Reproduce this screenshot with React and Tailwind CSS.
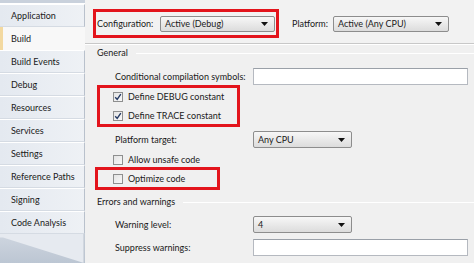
import React from 'react'

const tabs = [
  'Application',
  'Build',
  'Build Events',
  'Debug',
  'Resources',
  'Services',
  'Settings',
  'Reference Paths',
  'Signing',
  'Code Analysis',
]

function Arrow() {
  return (
    <svg width="7" height="4" viewBox="0 0 7 4" className="shrink-0">
      <path d="M0 0 H7 L3.5 4 Z" fill="#111" />
    </svg>
  )
}

function Dropdown({ value, className }) {
  return (
    <div
      className={
        'flex items-center justify-between rounded-[2px] border border-[#8d8d8d] bg-gradient-to-b from-[#f7f7f7] to-[#dcdcdc] pl-[4px] pr-[6px] ' +
        className
      }
    >
      <span>{value}</span>
      <Arrow />
    </div>
  )
}

function TextBox({ className }) {
  return (
    <div
      className={
        'border border-[#b5b9c0] border-t-[#9aa0a8] bg-white ' + className
      }
    />
  )
}

function CheckBox({ checked }) {
  return (
    <div className="flex h-[10px] w-[10px] shrink-0 items-center justify-center border border-[#8e8f8f] bg-gradient-to-br from-[#e4e4e4] to-[#f8f8f8]">
      {checked && (
        <svg width="8" height="8" viewBox="0 0 8 8">
          <path d="M1.2 4.2 L3.2 6.4 L6.8 1.2" fill="none" stroke="#253a63" strokeWidth="1.4" />
        </svg>
      )}
    </div>
  )
}

function CheckRow({ label, checked }) {
  return (
    <div className="flex h-[14px] items-center gap-[5px]">
      <CheckBox checked={checked} />
      <span>{label}</span>
    </div>
  )
}

function SectionTitle({ title }) {
  return (
    <div className="flex h-[18px] items-center gap-[8px] pl-[12px]">
      <span>{title}</span>
      <div className="h-px flex-1 border-b border-white bg-[#c9c9c9]" />
    </div>
  )
}

function Sidebar() {
  return (
    <div className="flex h-full w-[85px] shrink-0 flex-col bg-[#c9d1dc] pt-[3px]">
      <div className="h-px bg-white" />
      {tabs.map((tab) =>
        tab === 'Build' ? (
          <div
            key={tab}
            className="flex h-[23px] items-center border-l-[3px] border-[#f3d9a0] bg-[#f8f8f8] pl-[8px]"
          >
            {tab}
          </div>
        ) : (
          <div
            key={tab}
            className="flex h-[23px] items-center border-b border-t border-b-[#d5dbe3] border-t-white border-r border-r-[#b9c1cc] bg-gradient-to-r from-[#e4e9f0] to-[#eef1f5] pl-[11px]"
          >
            {tab}
          </div>
        )
      )}
      <svg className="w-full flex-1" viewBox="0 0 85 33" preserveAspectRatio="none">
        <defs>
          <linearGradient id="low" x1="0" y1="0" x2="0" y2="1">
            <stop offset="0" stopColor="#cfd6e0" />
            <stop offset="1" stopColor="#bcc6d3" />
          </linearGradient>
        </defs>
        <rect width="85" height="33" fill="url(#low)" />
        <path d="M0 0 H84 V33 L3 4 L0 4 Z" fill="#e6eaf0" />
        <path d="M84 0 V33" stroke="#b9c1cc" strokeWidth="1" />
      </svg>
    </div>
  )
}

export default function App() {
  return (
    <div
      className="flex h-[263px] w-[474px] overflow-hidden bg-[#f0f0f0] text-[9px] text-[#1a1a1a]"
      style={{ fontFamily: 'Lato, "Open Sans", sans-serif' }}
    >
      <Sidebar />
      <div className="flex min-w-0 flex-1 flex-col">
        <div className="flex h-[44px] shrink-0 items-center border-b border-[#c8c8c8] bg-[#f2f2f2] pt-[4px] shadow-[0_1px_0_#ffffff]">
          <div className="ml-[8px] flex h-[29px] w-[186px] items-center border-[3px] border-[#e3141c] pl-[1px]">
            <span className="w-[63px]">Configuration:</span>
            <Dropdown value="Active (Debug)" className="h-[16px] w-[115px]" />
          </div>
          <span className="ml-[13px] w-[41px]">Platform:</span>
          <Dropdown value="Active (Any CPU)" className="h-[16px] w-[116px]" />
        </div>

        <SectionTitle title="General" />

        <div className="mt-[6px] flex h-[17px] items-center pl-[30px] pr-[6px]">
          <span className="w-[138px]">Conditional compilation symbols:</span>
          <TextBox className="h-[17px] flex-1" />
        </div>

        <div className="ml-[12px] flex w-[143px] flex-col gap-[5px] border-[3px] border-[#e3141c] pb-[1px] pl-[13px] pt-[2px]">
          <CheckRow label="Define DEBUG constant" checked />
          <CheckRow label="Define TRACE constant" checked />
        </div>

        <div className="mt-[4px] flex h-[17px] items-center pl-[30px]">
          <span className="w-[138px]">Platform target:</span>
          <Dropdown value="Any CPU" className="h-[17px] w-[99px]" />
        </div>

        <div className="mt-[5px] pl-[28px]">
          <CheckRow label="Allow unsafe code" />
        </div>

        <div className="ml-[10px] flex h-[23px] w-[125px] items-center border-[3px] border-[#e3141c] pl-[15px]">
          <CheckRow label="Optimize code" />
        </div>

        <div className="mt-[3px]">
          <SectionTitle title="Errors and warnings" />
        </div>

        <div className="mt-[5px] flex h-[17px] items-center pl-[30px]">
          <span className="w-[138px]">Warning level:</span>
          <Dropdown value="4" className="h-[17px] w-[99px]" />
        </div>

        <div className="mt-[6px] flex h-[17px] items-center pl-[30px] pr-[6px]">
          <span className="w-[138px]">Suppress warnings:</span>
          <TextBox className="h-[17px] flex-1" />
        </div>
      </div>
    </div>
  )
}
